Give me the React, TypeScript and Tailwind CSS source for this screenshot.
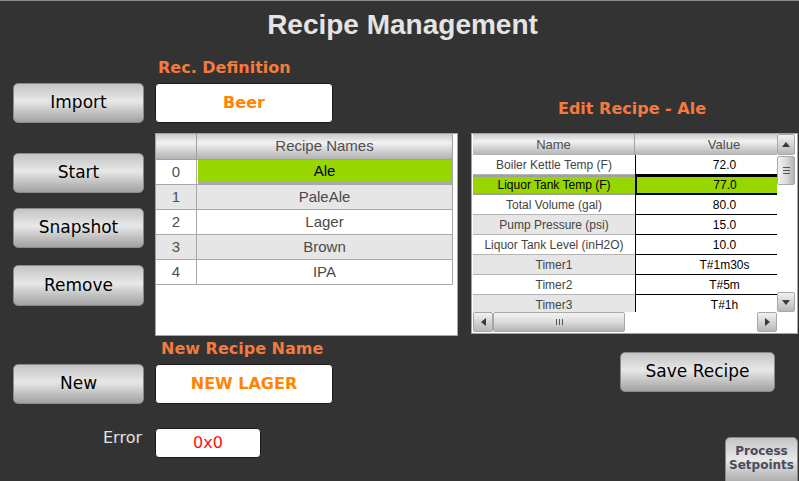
import React from "react";

const BTN =
  "flex items-center justify-center rounded-[5px] border border-[#8a8a8a] bg-linear-to-b from-[#c4c4c4] via-[#e8e8e8] via-45% to-[#a2a2a2] text-black text-[17px] font-['DejaVu_Sans',sans-serif]";
const HEAD =
  "bg-linear-to-b from-[#cacaca] via-[#f2f2f2] via-35% to-[#b2b2b2]";
const LABEL =
  "h-[20px] leading-[20px] text-[16px] font-bold text-[#f57a3d] font-['DejaVu_Sans',sans-serif]";
const BOX =
  "flex items-center justify-center rounded-[4px] border border-[#1a1a1a] bg-white";
const SB = "border border-[#a8a8a8] rounded-[2px]";

function Tri({ dir }: { dir: "up" | "down" | "left" | "right" }) {
  const pts =
    dir === "up"
      ? "0,5 8,5 4,0"
      : dir === "down"
      ? "0,0 8,0 4,5"
      : dir === "left"
      ? "5,0 5,8 0,4"
      : "0,0 0,8 5,4";
  const w = dir === "up" || dir === "down" ? 8 : 5;
  const h = dir === "up" || dir === "down" ? 5 : 8;
  return (
    <svg width={w} height={h} viewBox={`0 0 ${w} ${h}`}>
      <polygon points={pts} fill="#3a3a3a" />
    </svg>
  );
}

const recipes = ["Ale", "PaleAle", "Lager", "Brown", "IPA"];

const params: [string, string][] = [
  ["Boiler Kettle Temp (F)", "72.0"],
  ["Liquor Tank Temp (F)", "77.0"],
  ["Total Volume (gal)", "80.0"],
  ["Pump Pressure (psi)", "15.0"],
  ["Liquor Tank Level (inH2O)", "10.0"],
  ["Timer1", "T#1m30s"],
  ["Timer2", "T#5m"],
  ["Timer3", "T#1h"],
];

function RecipeTable() {
  return (
    <div className="h-[203px] w-[303px] border border-[#a4a4a4] bg-white font-['Liberation_Sans',Arial,sans-serif]">
      <div className="flex h-[26px]">
        <div className={`w-[41px] border-r border-b border-[#a0a0a0] ${HEAD}`} />
        <div
          className={`flex w-[256px] items-center justify-center border-r border-b border-[#a0a0a0] text-[15px] text-[#4e4e4e] ${HEAD}`}
        >
          Recipe Names
        </div>
      </div>
      {recipes.map((r, i) => {
        const sel = i === 0;
        const bg = i % 2 === 1 ? "bg-[#e6e6e6]" : "bg-white";
        return (
          <div key={r} className="flex h-[25px]">
            <div
              className={`flex w-[41px] items-center justify-center border-r border-b border-[#a8a8a8] text-[15px] text-[#505050] ${bg}`}
            >
              {i}
            </div>
            <div
              className={`flex w-[256px] border-r border-b border-[#a8a8a8] text-[15px] ${bg}`}
            >
              {sel ? (
                <div className="ml-[1px] flex flex-1 items-center justify-center border-r border-b-2 border-[#a8a8a8] bg-[#97d600] text-black">
                  {r}
                </div>
              ) : (
                <div className="flex flex-1 items-center justify-center text-[#4a4a4a]">
                  {r}
                </div>
              )}
            </div>
          </div>
        );
      })}
    </div>
  );
}

function ParamTable() {
  return (
    <div className="flex h-[201px] w-[327px] border border-[#a4a4a4] bg-white font-['Liberation_Sans',Arial,sans-serif]">
      <div className="flex w-[305px] flex-col pl-[1px]">
        <div className="h-[178px] overflow-hidden">
          <div className="w-[340px]">
            <div className="flex h-[21px]">
              <div
                className={`flex w-[162px] items-center justify-center border-r border-[#a0a0a0] text-[13px] text-[#4e4e4e] ${HEAD}`}
              >
                Name
              </div>
              <div
                className={`flex w-[178px] items-center justify-center text-[13px] text-[#4e4e4e] ${HEAD}`}
              >
                Value
              </div>
            </div>
            {params.map(([n, v], i) => {
              const sel = i === 1;
              const bg = i % 2 === 1 ? "bg-[#e6e6e6]" : "bg-white";
              return (
                <div key={n} className="flex h-[20px]">
                  {sel ? (
                    <div className="flex w-[162px] items-center justify-center border-y-2 border-[#a0a0a0] bg-[#97d600] text-[12px] text-black">
                      {n}
                    </div>
                  ) : (
                    <div
                      className={`flex w-[162px] items-center justify-center border-b border-[#b4b4b4] text-[12px] text-[#444] ${bg}`}
                    >
                      {n}
                    </div>
                  )}
                  {sel ? (
                    <div className="flex w-[178px] items-center justify-center border-y-2 border-l-2 border-black bg-[#97d600] text-[12px] text-black">
                      {v}
                    </div>
                  ) : (
                    <div className="flex w-[178px] items-center justify-center border-b border-l border-black bg-white text-[12px] text-black">
                      {v}
                    </div>
                  )}
                </div>
              );
            })}
          </div>
        </div>
        <div className="flex h-[20px]">
          <div className={`flex w-[20px] items-center justify-center bg-linear-to-b from-[#f2f2f2] to-[#b8b8b8] ${SB}`}>
            <Tri dir="left" />
          </div>
          <div className={`flex w-[132px] items-center justify-center gap-[2px] bg-linear-to-b from-[#f2f2f2] via-[#dcdcdc] to-[#b4b4b4] ${SB}`}>
            <div className="h-[6px] w-[1px] bg-[#555]" />
            <div className="h-[6px] w-[1px] bg-[#555]" />
            <div className="h-[6px] w-[1px] bg-[#555]" />
          </div>
          <div className="flex-1 bg-white" />
          <div className={`flex w-[20px] items-center justify-center bg-linear-to-b from-[#f2f2f2] to-[#b8b8b8] ${SB}`}>
            <Tri dir="right" />
          </div>
        </div>
      </div>
      <div className="flex w-[20px] flex-col">
        <div className={`flex h-[21px] w-[18px] items-center justify-center bg-linear-to-b from-[#f2f2f2] to-[#b8b8b8] ${SB}`}>
          <Tri dir="up" />
        </div>
        <div className={`mt-[1px] flex h-[29px] w-[18px] flex-col items-center justify-center gap-[2px] bg-linear-to-r from-[#f2f2f2] via-[#dcdcdc] to-[#b4b4b4] ${SB}`}>
          <div className="h-[1px] w-[7px] bg-[#555]" />
          <div className="h-[1px] w-[7px] bg-[#555]" />
          <div className="h-[1px] w-[7px] bg-[#555]" />
        </div>
        <div className="flex-1" />
        <div className={`flex h-[20px] w-[18px] items-center justify-center bg-linear-to-b from-[#f2f2f2] to-[#b8b8b8] ${SB}`}>
          <Tri dir="down" />
        </div>
        <div className="h-[21px]" />
      </div>
    </div>
  );
}

export default function App() {
  return (
    <div className="h-[481px] w-[799px] overflow-hidden border-t border-[#8c8c8c] bg-[#333333]">
      <div className="flex h-[48px] items-center justify-center pl-[6px] font-['Liberation_Sans',Arial,sans-serif] text-[28px] leading-[48px] font-bold text-[#e4e4e4]">
        Recipe Management
      </div>
      <div className="flex pl-[13px]">
        {/* left column */}
        <div className="flex w-[131px] flex-col">
          <div className={`mt-[34px] h-[40px] ${BTN}`}>Import</div>
          <div className={`mt-[30px] h-[40px] ${BTN}`}>Start</div>
          <div className={`mt-[15px] h-[40px] ${BTN}`}>Snapshot</div>
          <div className={`mt-[17px] h-[41px] ${BTN}`}>Remove</div>
          <div className={`mt-[58px] h-[40px] ${BTN}`}>New</div>
          <div className="mt-[24px] h-[20px] pr-[2px] text-right font-['DejaVu_Sans',sans-serif] text-[16px] leading-[20px] text-[#e2e2e2]">
            Error
          </div>
        </div>
        {/* middle column */}
        <div className="ml-[11px] flex w-[303px] flex-col">
          <div className={`mt-[9px] pl-[3px] ${LABEL}`}>Rec. Definition</div>
          <div className={`mt-[5px] h-[40px] w-[178px] ${BOX} font-['DejaVu_Sans',sans-serif] text-[16px] font-bold text-[#ff8400]`}>
            Beer
          </div>
          <div className="mt-[10px]">
            <RecipeTable />
          </div>
          <div className={`mt-[3px] pl-[6px] ${LABEL}`}>New Recipe Name</div>
          <div className={`mt-[5px] h-[40px] w-[178px] ${BOX} font-['DejaVu_Sans',sans-serif] text-[16px] font-bold text-[#ff8400]`}>
            NEW LAGER
          </div>
          <div className={`mt-[24px] h-[30px] w-[106px] ${BOX} font-['DejaVu_Sans',sans-serif] text-[16px] text-[#ff1010]`}>
            0x0
          </div>
        </div>
        {/* right column */}
        <div className="ml-[13px] flex w-[328px] flex-col">
          <div className={`mt-[50px] pr-[6px] text-center ${LABEL}`}>Edit Recipe - Ale</div>
          <div className="mt-[14px]">
            <ParamTable />
          </div>
          <div className={`mt-[18px] ml-[149px] h-[40px] w-[155px] ${BTN}`}>Save Recipe</div>
          <div className="mt-[45px] ml-[254px] flex h-[50px] w-[73px] flex-col items-center rounded-[5px] border border-[#8a8a8a] bg-linear-to-b from-[#c4c4c4] via-[#e8e8e8] via-45% to-[#a2a2a2] pt-[6px] font-['DejaVu_Sans',sans-serif] text-[12px] leading-[14px] font-bold text-[#4a4a5c]">
            <span>Process</span>
            <span>Setpoints</span>
          </div>
        </div>
      </div>
    </div>
  );
}
